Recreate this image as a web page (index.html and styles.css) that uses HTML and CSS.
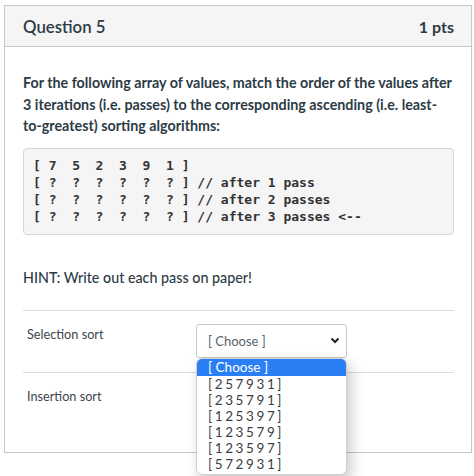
FILE: index.html
```html
<!DOCTYPE html>
<html>
<head>
<meta charset="utf-8">
<link rel="stylesheet" href="styles.css">
</head>
<body>
<div class="card">
  <div class="header">
    <span class="title">Question 5</span>
    <span class="pts">1 pts</span>
  </div>
  <div class="body">
    <p class="lead">For the following array of values, match the order of the values after<br>3 iterations (i.e. passes) to the corresponding ascending (i.e. least-<br>to-greatest) sorting algorithms:</p>
    <pre class="code">[ 7  5  2  3  9  1 ]
[ ?  ?  ?  ?  ?  ? ] // after 1 pass
[ ?  ?  ?  ?  ?  ? ] // after 2 passes
[ ?  ?  ?  ?  ?  ? ] // after 3 passes &lt;--</pre>
    <p class="hint">HINT: Write out each pass on paper!</p>
    <div class="answers">
      <div class="row">
        <span class="label">Selection sort</span>
        <div class="select-wrap">
          <div class="select"><span>[ Choose ]</span>
            <svg class="chev" width="10" height="7" viewBox="0 0 10 7"><polyline points="1.5,1.5 5,5 8.5,1.5" fill="none" stroke="#222" stroke-width="2"/></svg>
          </div>
          <ul class="dropdown">
            <li class="active">[ Choose ]</li>
            <li class="num">[257931]</li>
            <li class="num">[235791]</li>
            <li class="num">[125397]</li>
            <li class="num">[123579]</li>
            <li class="num">[123597]</li>
            <li class="num">[572931]</li>
          </ul>
        </div>
      </div>
      <div class="row">
        <span class="label">Insertion sort</span>
        <div class="select-wrap">
          <div class="select"></div>
        </div>
      </div>
    </div>
  </div>
</div>
</body>
</html>
```

FILE: styles.css
```css
* { box-sizing: border-box; }
html, body { margin: 0; background: #fff; }
body {
  min-height: 476px;
  padding: 5px 2px 0 4px;
  font-family: Lato, "Noto Sans", sans-serif;
  color: #2d3b45;
}
.card {
  border: 1px solid #c4c8cb;
  height: 448px;
  width: 468px;
}
.header {
  height: 41px;
  background: #f5f5f5;
  border-bottom: 1px solid #c4c8cb;
  display: flex;
  justify-content: space-between;
  align-items: center;
  padding: 0 17px 0 18px;
}
.title { font-size: 16.8px; font-weight: 600; color: #2d3b45; }
.pts { font-size: 16px; font-weight: 700; color: #2d3b45; }
.body { padding: 25px 17px 0 18px; }
.lead {
  margin: 0;
  font-size: 14.3px;
  font-weight: 700;
  line-height: 21.5px;
  white-space: nowrap;
}
.code {
  margin: 11px 0 0;
  background: #f5f5f5;
  border: 1px solid #d6d6d6;
  border-radius: 4px;
  padding: 8px 9px 9px;
  font-family: "DejaVu Sans Mono", monospace;
  font-weight: 700;
  font-size: 13px;
  line-height: 17px;
  color: #333;
}
.hint {
  margin: 32px 0 0;
  font-size: 14.3px;
  line-height: 21px;
  font-weight: 500;
}
.answers { margin-top: 22px; }
.row {
  border-top: 1px solid #dcdcdc;
  height: 62px;
  display: flex;
  align-items: flex-start;
  padding: 13px 0 0 4px;
}
.label {
  width: 169px;
  font-size: 12.7px;
  line-height: 20px;
  color: #3d454c;
}
.select-wrap { position: relative; }
.select {
  width: 151px;
  height: 34px;
  border: 1px solid #c8c8c8;
  border-radius: 3px;
  background: #fff;
  display: flex;
  align-items: center;
  justify-content: space-between;
  padding: 0 6px 0 11px;
  font-size: 13px;
  color: #59636b;
}
.dropdown {
  position: absolute;
  left: 0;
  top: 34px;
  z-index: 2;
  width: 151px;
  margin: 0;
  padding: 0 0 2px;
  list-style: none;
  background: #fff;
  border: 1px solid #d0d0d0;
  border-radius: 6px;
  box-shadow: 4px 6px 14px rgba(0, 0, 0, 0.22);
  overflow: hidden;
  font-size: 13px;
  color: #3b4045;
}
.dropdown li {
  height: 16px;
  line-height: 16px;
  padding-left: 11px;
}
.dropdown li.active {
  background: #2a7ff4;
  color: #fff;
  height: 17px;
  line-height: 17px;
  font-size: 13.5px;
}
.dropdown li.num { letter-spacing: 2.6px; font-size: 13.5px; }
```
